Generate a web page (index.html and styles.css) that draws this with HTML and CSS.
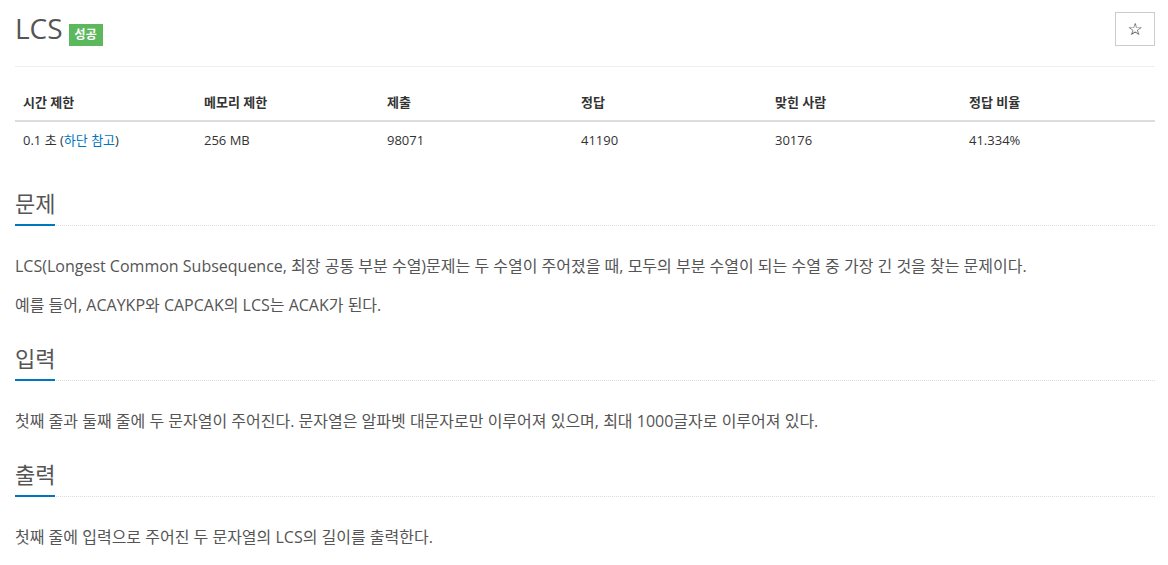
FILE: index.html
```html
<!DOCTYPE html>
<html lang="ko">
<head>
    <meta charset="UTF-8">
    <meta name="viewport" content="width=device-width, initial-scale=1.0">
    <title>LCS</title>
    <link rel="stylesheet" href="styles.css">
</head>
<body>

    <div class="container">
        <div class="page-header">
            <h1 class="title">LCS<span class="label-success">성공</span></h1>
            <button class="star-btn" type="button">☆</button>
        </div>

        <table class="problem-info">
            <thead>
                <tr>
                    <th>시간 제한</th>
                    <th>메모리 제한</th>
                    <th>제출</th>
                    <th>정답</th>
                    <th>맞힌 사람</th>
                    <th>정답 비율</th>
                </tr>
            </thead>
            <tbody>
                <tr>
                    <td>0.1 초 (<a href="#">하단 참고</a>)</td>
                    <td>256 MB</td>
                    <td>98071</td>
                    <td>41190</td>
                    <td>30176</td>
                    <td>41.334%</td>
                </tr>
            </tbody>
        </table>

        <section class="problem-section">
            <div class="headline"><h2>문제</h2></div>
            <div class="problem-text">
                <p>LCS(Longest Common Subsequence, 최장 공통 부분 수열)문제는 두 수열이 주어졌을 때, 모두의 부분 수열이 되는 수열 중 가장 긴 것을 찾는 문제이다.</p>
                <p>예를 들어, ACAYKP와 CAPCAK의 LCS는 ACAK가 된다.</p>
            </div>
        </section>

        <section class="problem-section">
            <div class="headline"><h2>입력</h2></div>
            <div class="problem-text">
                <p>첫째 줄과 둘째 줄에 두 문자열이 주어진다. 문자열은 알파벳 대문자로만 이루어져 있으며, 최대 1000글자로 이루어져 있다.</p>
            </div>
        </section>

        <section class="problem-section">
            <div class="headline"><h2>출력</h2></div>
            <div class="problem-text">
                <p>첫째 줄에 입력으로 주어진 두 문자열의 LCS의 길이를 출력한다.</p>
            </div>
        </section>
    </div>

</body>
</html>
```

FILE: styles.css
```css
body {
    margin: 0;
    font-family: "Open Sans", "Noto Sans CJK KR", sans-serif;
    color: #555;
    background-color: #fff;
}

.container {
    padding: 0 13px 0 15px;
}

.page-header {
    display: flex;
    align-items: center;
    justify-content: space-between;
    padding: 12px 0 20px;
    border-bottom: 1px solid #eee;
}

.title {
    margin: 0;
    font-size: 28px;
    font-weight: normal;
    line-height: 32px;
    color: #555;
}

.label-success {
    display: inline-block;
    margin-left: 6px;
    padding: 5px 6px;
    font-size: 12px;
    line-height: 12px;
    font-weight: bold;
    color: #fff;
    background-color: #5cb85c;
    vertical-align: baseline;
}

.star-btn {
    width: 40px;
    height: 34px;
    padding: 0;
    border: 1px solid #ccc;
    background-color: #fff;
    color: #111;
    font-family: "DejaVu Sans", sans-serif;
    font-size: 17px;
    cursor: pointer;
}

.problem-info {
    width: 100%;
    margin: 17px 0 31px;
    border-collapse: collapse;
    table-layout: fixed;
    font-size: 13px;
    color: #333;
}

.problem-info th,
.problem-info td {
    padding: 8px;
    line-height: 20px;
    text-align: left;
}

.problem-info th {
    font-weight: bold;
    border-bottom: 2px solid #ddd;
}

.problem-info th:nth-child(1) { width: 165px; }
.problem-info th:nth-child(2) { width: 167px; }

.problem-info a {
    color: #0076c0;
    text-decoration: none;
}

.headline {
    margin: 25px 0 26px;
    border-bottom: 1px dotted #dcdcdc;
}

.headline h2 {
    display: inline-block;
    margin: 0 0 -1px;
    padding-bottom: 7px;
    font-size: 22px;
    font-weight: normal;
    line-height: 28px;
    border-bottom: 2px solid #0076c0;
}

.problem-text p {
    margin: 0 0 11px;
    font-size: 16px;
    line-height: 28px;
}
```
